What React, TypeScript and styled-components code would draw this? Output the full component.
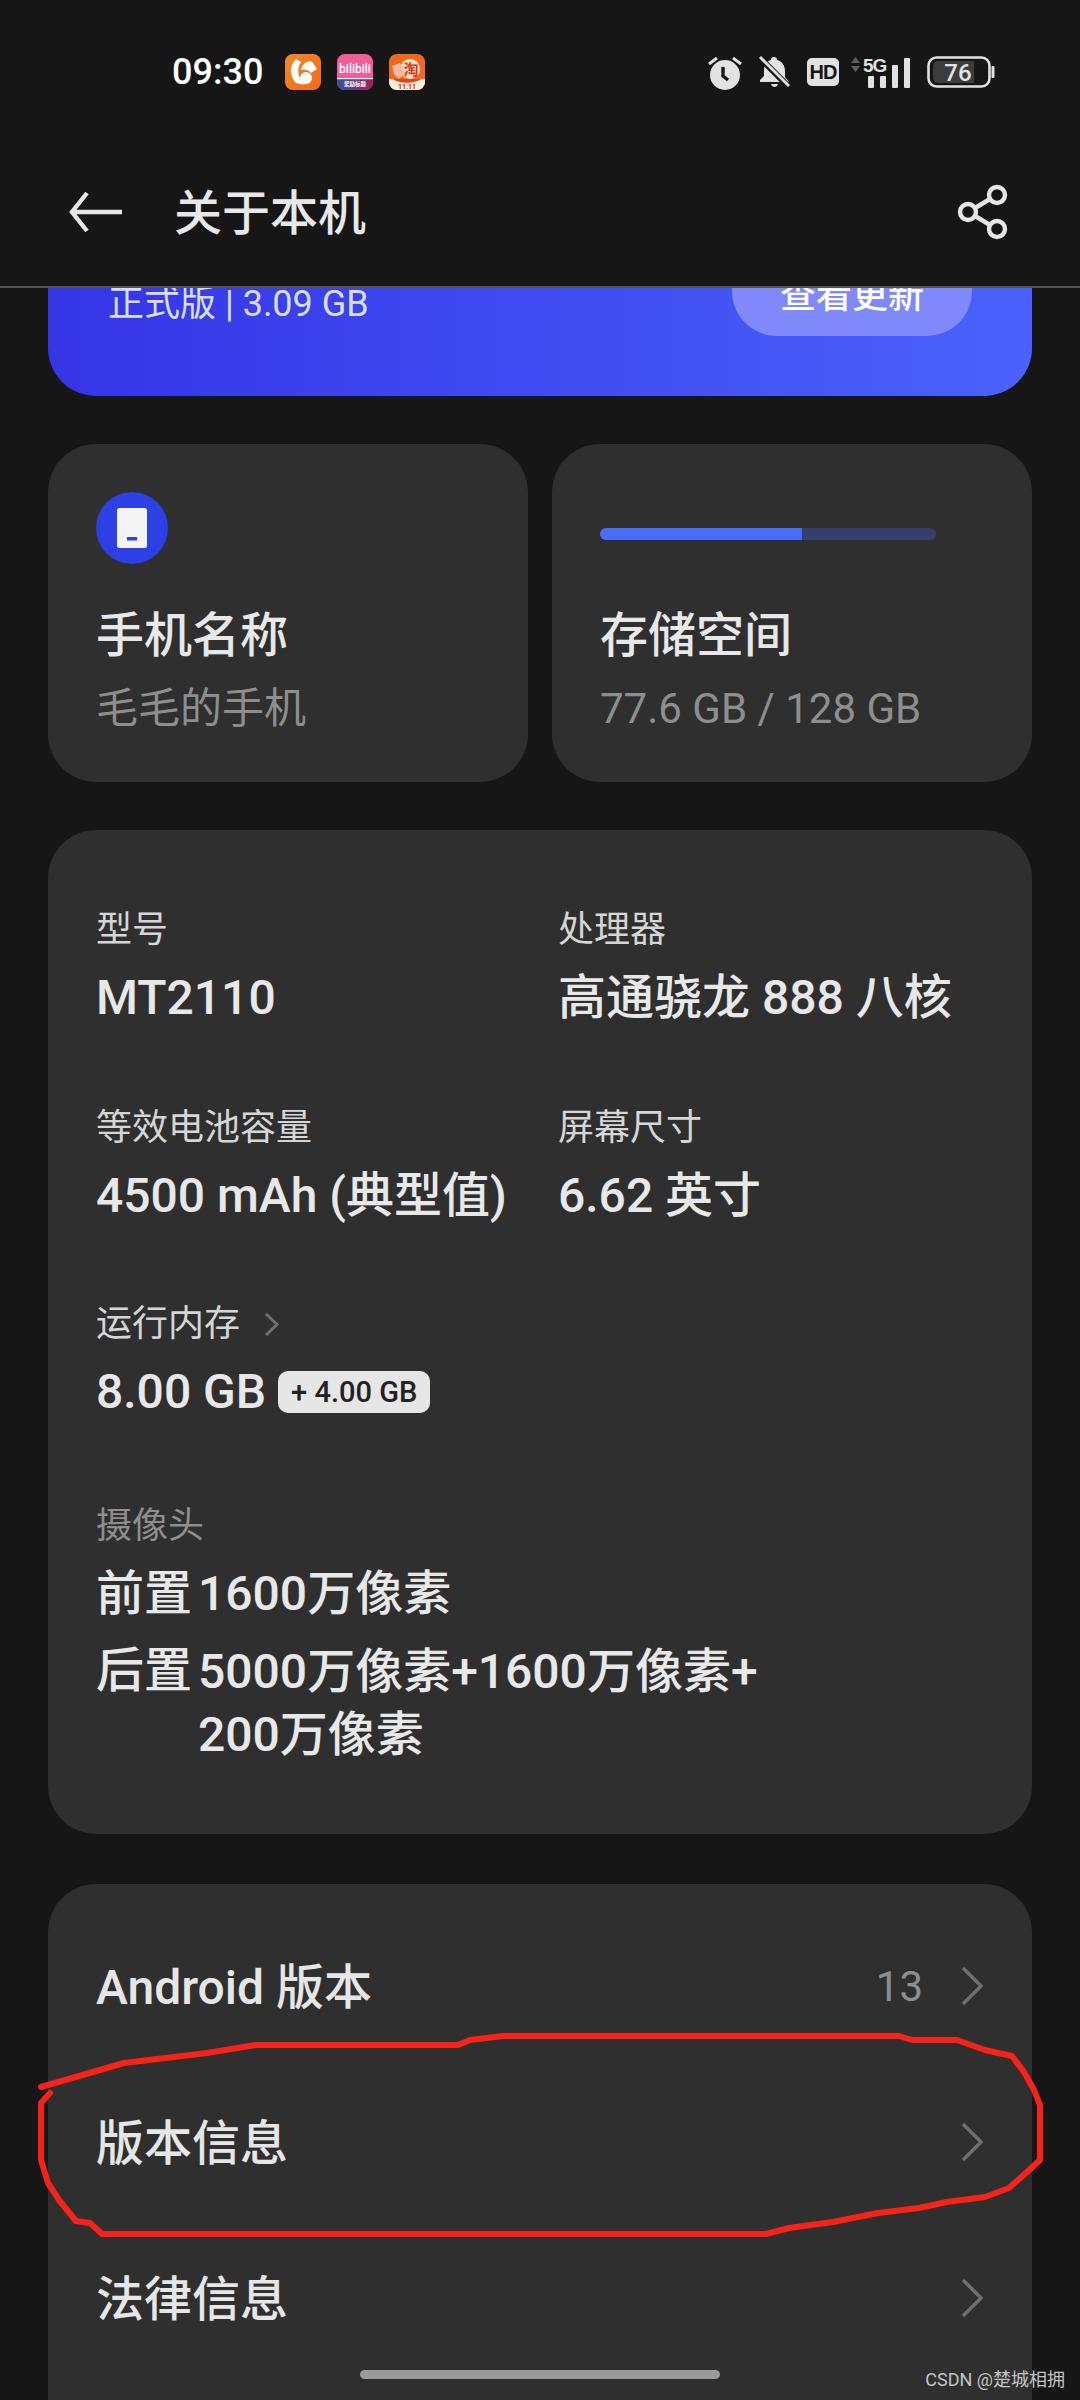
import styled, { createGlobalStyle } from 'styled-components';

const GlobalStyle = createGlobalStyle`
  html, body {
    margin: 0;
    padding: 0;
    background: #161616;
  }
  * {
    box-sizing: border-box;
  }
`;

const Page = styled.div`
  position: relative;
  width: 1080px;
  height: 2400px;
  overflow: hidden;
  display: flex;
  flex-direction: column;
  background: #161616;
  color: #e6e6e6;
  font-family: Roboto, 'Noto Sans CJK SC', sans-serif;
`;

const StatusBar = styled.div`
  height: 144px;
  flex: none;
  display: flex;
  align-items: center;
  padding: 0 85px 0 172px;
`;

const Time = styled.span`
  font-size: 36px;
  font-weight: 500;
  color: #fff;
  width: 113px;
`;

const AppIcons = styled.div`
  display: flex;
  gap: 16px;
`;

const StatusIcons = styled.div`
  margin-left: auto;
  display: flex;
  align-items: center;
  gap: 17px;
`;

const Header = styled.header`
  height: 144px;
  flex: none;
  display: flex;
  align-items: center;
  padding: 0 68px 6px;
  border-bottom: 2px solid #565656;
`;

const Title = styled.h1`
  margin: 0 0 6px 50px;
  font-size: 48px;
  font-weight: 500;
  color: #e8e8e8;
`;

const ShareButton = styled.div`
  margin-left: auto;
  display: flex;
`;

const Scroll = styled.div`
  flex: 1;
  min-height: 0;
  overflow: hidden;
  padding: 0 48px;
  display: flex;
  flex-direction: column;
`;

const Banner = styled.div`
  flex: none;
  height: 108px;
  border-radius: 0 0 48px 48px;
  background: linear-gradient(90deg, #3535e6 0%, #4a62fb 100%);
  display: flex;
  padding: 0 60px;
  margin-bottom: 48px;
`;

const BannerText = styled.span`
  margin-top: -2px;
  font-size: 36px;
  line-height: 36px;
  height: 36px;
  color: #d9defc;
`;

const UpdateButton = styled.div`
  margin-left: auto;
  margin-top: -42px;
  width: 240px;
  height: 90px;
  padding-top: 2px;
  border-radius: 45px;
  background: #8089f9;
  color: #fff;
  font-size: 36px;
  font-weight: 500;
  display: flex;
  align-items: center;
  justify-content: center;
`;

const MiniCards = styled.div`
  flex: none;
  display: grid;
  grid-template-columns: 480px 480px;
  gap: 24px;
  margin-bottom: 48px;
`;

const Card = styled.section`
  background: #2f2f2f;
  border-radius: 48px;
`;

const MiniCard = styled(Card)`
  height: 338px;
  padding: 48px;
`;

const IconSlot = styled.div<{ $bar?: boolean }>`
  height: 72px;
  margin-bottom: 42px;
  padding-top: ${p => (p.$bar ? '36px' : '0')};
`;

const PhoneBadge = styled.div`
  width: 72px;
  height: 72px;
  border-radius: 50%;
  background: #2c40e6;
  display: flex;
  align-items: center;
  justify-content: center;
`;

const Progress = styled.div`
  width: 336px;
  height: 12px;
  border-radius: 6px;
  overflow: hidden;
  background: #34406a;
`;

const ProgressFill = styled.div`
  height: 100%;
  background: #4a6cf7;
`;

const MiniTitle = styled.div`
  font-size: 48px;
  font-weight: 500;
  line-height: 60px;
  color: #e8e8e8;
`;

const MiniSub = styled.div`
  margin-top: 15px;
  font-size: 42px;
  line-height: 56px;
  color: #8e8e8e;
`;

const SpecCard = styled(Card)`
  flex: none;
  height: 1004px;
  padding: 76px 48px 0;
  margin-bottom: 50px;
`;

const SpecGrid = styled.div`
  display: grid;
  grid-template-columns: 462px 1fr;
  row-gap: 76px;
`;

const Spec = styled.div<{ $wide?: boolean; $lift?: number }>`
  display: flex;
  flex-direction: column;
  gap: 14px;
  grid-column: ${p => (p.$wide ? '1 / -1' : 'auto')};
  margin-top: ${p => p.$lift ?? 0}px;
`;

const Label = styled.div<{ $muted?: boolean }>`
  display: flex;
  align-items: center;
  gap: 24px;
  font-size: 36px;
  line-height: 48px;
  color: ${p => (p.$muted ? '#8e8e8e' : '#d6d6d6')};
`;

const Value = styled.div`
  display: flex;
  align-items: center;
  gap: 12px;
  font-size: 48px;
  font-weight: 500;
  line-height: 60px;
  color: #e8e8e8;
  white-space: nowrap;
`;

const Extra = styled.span`
  height: 42px;
  padding: 0 13px;
  border-radius: 10px;
  background: #e6e6e6;
  color: #222;
  font-size: 29px;
  font-weight: 500;
  line-height: 42px;
`;

const CameraRows = styled.div`
  display: grid;
  grid-template-columns: 102px 1fr;
  row-gap: 17px;
  font-size: 48px;
  font-weight: 500;
  line-height: 60px;
  color: #e8e8e8;
`;

const CameraLines = styled.div`
  line-height: 63px;
  margin-top: -1px;
`;

const ListCard = styled(Card)`
  flex: none;
  height: 640px;
  padding-top: 24px;
`;

const Row = styled.div`
  height: 156px;
  display: flex;
  align-items: center;
  padding: 0 49px 0 48px;
`;

const RowTitle = styled.span`
  margin-bottom: 6px;
  font-size: 48px;
  font-weight: 500;
  color: #e6e6e6;
`;

const RowValue = styled.span`
  margin-left: auto;
  margin-right: 38px;
  font-size: 42px;
  color: #8e8e8e;
`;

const RowChevron = styled.div<{ $push?: boolean }>`
  display: flex;
  margin-left: ${p => (p.$push ? 'auto' : '0')};
`;

const Annotation = styled.svg`
  position: absolute;
  left: 0;
  top: 0;
  pointer-events: none;
`;

const HomeBar = styled.div`
  position: absolute;
  left: 360px;
  top: 2370px;
  width: 360px;
  height: 9px;
  border-radius: 5px;
  background: #9a9a9a;
`;

const Watermark = styled.div`
  position: absolute;
  right: 15px;
  top: 2367px;
  font-size: 18px;
  line-height: 26px;
  color: #c4c4c4;
`;

const HdBadge = styled.div`
  width: 32px;
  height: 28px;
  margin-right: -6px;
  border-radius: 5px;
  background: #e2e2e2;
  color: #161616;
  font-family: 'Liberation Sans', sans-serif;
  font-size: 20px;
  font-weight: 700;
  letter-spacing: -1px;
  text-align: center;
  line-height: 28px;
`;

const Chevron = ({ w, h, color = '#6f6f6f', sw = 3.5 }: { w: number; h: number; color?: string; sw?: number }) => (
  <svg width={w} height={h} viewBox={`0 0 ${w} ${h}`} fill="none">
    <path d={`M2 2 L${w - 2} ${h / 2} L2 ${h - 2}`} stroke={color} strokeWidth={sw} />
  </svg>
);

const UcIcon = () => (
  <svg width="36" height="36" viewBox="0 0 36 36">
    <defs>
      <linearGradient id="uc" x1="0" y1="0" x2="1" y2="1">
        <stop offset="0" stopColor="#f08a2c" />
        <stop offset="1" stopColor="#f2691a" />
      </linearGradient>
    </defs>
    <rect width="36" height="36" rx="8" fill="url(#uc)" />
    <path d="M11 5 C4 12 5 23 11 29 L20 31 C13 25 11 15 16 8 Z" fill="#fff" />
    <circle cx="21" cy="24" r="6" fill="#fff" />
    <path d="M16 16 C18 8 25 5 28 9 L32 15 L26 19 C24 16 21 15 16 16 Z" fill="#fff" />
  </svg>
);

const BiliIcon = () => (
  <svg width="36" height="36" viewBox="0 0 36 36">
    <defs>
      <linearGradient id="bili" x1="0" y1="0" x2="1" y2="0">
        <stop offset="0" stopColor="#2a55a8" />
        <stop offset="1" stopColor="#a81c58" />
      </linearGradient>
    </defs>
    <rect width="36" height="36" rx="8" fill="#ee5f98" />
    <path d="M0 25 H36 V28 A8 8 0 0 1 28 36 H8 A8 8 0 0 1 0 28 Z" fill="url(#bili)" />
    <rect y="24" width="36" height="1.2" fill="#fff" />
    <text x="18" y="19" textAnchor="middle" fontSize="12" fontWeight="500" fill="#fff" fontFamily="Roboto, sans-serif">
      bilibili
    </text>
    <text x="18" y="32" textAnchor="middle" fontSize="5.5" fontWeight="700" fill="#fff" fontFamily="'Noto Sans CJK SC', sans-serif">
      奖励标题
    </text>
  </svg>
);

const TaobaoIcon = () => (
  <svg width="36" height="36" viewBox="0 0 36 36">
    <defs>
      <clipPath id="tb">
        <rect width="36" height="36" rx="8" />
      </clipPath>
    </defs>
    <g clipPath="url(#tb)">
      <rect width="36" height="36" fill="#ee6a1e" />
      <rect y="25" width="36" height="11" fill="#fdeedd" />
      <path d="M4 25 C10 30 26 30 32 25 Z" fill="#e8401e" />
      <circle cx="21" cy="15" r="10" fill="#fbe3c8" />
      <path d="M3 12 L11 9 L16 19 L10 25 L5 20 Z" fill="#f9b7a0" />
      <text x="22" y="21" textAnchor="middle" fontSize="15" fontWeight="700" fill="#d8341a" fontFamily="'Noto Sans CJK SC', sans-serif">
        淘
      </text>
      <text x="18" y="34.5" textAnchor="middle" fontSize="7" fontWeight="700" fill="#c62a1c" fontFamily="Roboto, sans-serif">
        11.11
      </text>
    </g>
  </svg>
);

const AlarmIcon = () => (
  <svg width="34" height="35" viewBox="0 0 34 35">
    <circle cx="17" cy="20" r="15" fill="#e2e2e2" />
    <path d="M1 9 L9 3 M33 9 L25 3" stroke="#e2e2e2" strokeWidth="3" />
    <path d="M15 12 V21 L20 25" stroke="#161616" strokeWidth="3.4" fill="none" />
  </svg>
);

const MuteBellIcon = () => (
  <svg width="31" height="34" viewBox="0 0 31 34">
    <path d="M15 2 C17 2 18 3 18 5 C23 6 26 11 26 16 V22 L30 27 H1 V25 L5 21 V15 C5 10 8 6 12 5 C12 3 13 2 15 2 Z" fill="#e2e2e2" />
    <path d="M12 29 H19 C18 33 13 33 12 29 Z" fill="#e2e2e2" />
    <path d="M0 2 L30 32" stroke="#161616" strokeWidth="6" />
    <path d="M1 2 L30 31" stroke="#e2e2e2" strokeWidth="3" />
  </svg>
);

const SignalIcon = () => (
  <svg width="60" height="34" viewBox="0 0 60 34">
    <path d="M1 8 L5.5 2 L10 8 Z M1 11 L5.5 17 L10 11 Z" fill="#5e5e5e" />
    <text x="13" y="17" fontSize="19" fontWeight="700" fill="#e2e2e2" fontFamily="'Liberation Sans', sans-serif" letterSpacing="-1">
      5G
    </text>
    <rect x="18" y="21" width="6" height="12" rx="1" fill="#e2e2e2" />
    <rect x="30" y="21" width="6" height="12" rx="1" fill="#e2e2e2" />
    <rect x="42" y="10" width="6" height="23" rx="1" fill="#e2e2e2" />
    <rect x="54" y="3" width="6" height="30" rx="1" fill="#e2e2e2" />
  </svg>
);

const BatteryIcon = () => (
  <svg width="68" height="32" viewBox="0 0 68 32">
    <rect x="1.5" y="1.5" width="61" height="29" rx="8" fill="none" stroke="#e2e2e2" strokeWidth="2.6" />
    <path d="M11 5 H47 V27 H11 A5 5 0 0 1 6 22 V10 A5 5 0 0 1 11 5 Z" fill="#3c3c3c" />
    <rect x="64.5" y="10" width="3" height="12" rx="1" fill="#e2e2e2" />
    <text x="31" y="25" textAnchor="middle" fontSize="24" fontWeight="500" fill="#e2e2e2" fontFamily="Roboto, sans-serif">
      76
    </text>
  </svg>
);

const BackArrow = () => (
  <svg width="56" height="44" viewBox="0 0 56 44" fill="none">
    <path d="M54 22 H6 M19 3 L4 22 L19 41" stroke="#e6e6e6" strokeWidth="4.4" />
  </svg>
);

const ShareIcon = () => (
  <svg width="56" height="56" viewBox="0 0 56 56" fill="none" stroke="#e6e6e6" strokeWidth="4.4">
    <circle cx="41" cy="11" r="8" />
    <circle cx="12" cy="28" r="8" />
    <circle cx="41" cy="45" r="8" />
    <path d="M19 24 L34 15 M19 32 L34 41" />
  </svg>
);

const PhoneGlyph = () => (
  <svg width="30" height="40" viewBox="0 0 30 40">
    <rect width="30" height="40" rx="2.5" fill="#f4f4f4" />
    <rect x="10" y="29" width="10" height="3.5" fill="#2c40e6" />
  </svg>
);

// hand drawn loop around the "版本信息" row
const loop =
  'M41 2087 L124 2063 L207 2053 L256 2045 L458 2045 L470 2040 L503 2036 L899 2036 L912 2040 L957 2040 ' +
  'L985 2050 L1012 2056 L1024 2072 L1034 2090 L1040 2105 L1040 2160 L1026 2173 L1009 2188 L985 2197 ' +
  'L947 2202 L919 2208 L878 2213 L833 2222 L789 2228 L766 2234 L102 2234 L90 2223 L76 2221 L59 2200 ' +
  'L48 2183 L41 2160 L41 2103 L50 2093';

export default function App() {
  return (
    <Page>
      <GlobalStyle />
      <StatusBar>
        <Time>09:30</Time>
        <AppIcons>
          <UcIcon />
          <BiliIcon />
          <TaobaoIcon />
        </AppIcons>
        <StatusIcons>
          <AlarmIcon />
          <MuteBellIcon />
          <HdBadge>HD</HdBadge>
          <SignalIcon />
          <BatteryIcon />
        </StatusIcons>
      </StatusBar>

      <Header>
        <BackArrow />
        <Title>关于本机</Title>
        <ShareButton>
          <ShareIcon />
        </ShareButton>
      </Header>

      <Scroll>
        <Banner>
          <BannerText>正式版 | 3.09 GB</BannerText>
          <UpdateButton>查看更新</UpdateButton>
        </Banner>

        <MiniCards>
          <MiniCard>
            <IconSlot>
              <PhoneBadge>
                <PhoneGlyph />
              </PhoneBadge>
            </IconSlot>
            <MiniTitle>手机名称</MiniTitle>
            <MiniSub>毛毛的手机</MiniSub>
          </MiniCard>
          <MiniCard>
            <IconSlot $bar>
              <Progress>
                <ProgressFill style={{ width: '60%' }} />
              </Progress>
            </IconSlot>
            <MiniTitle>存储空间</MiniTitle>
            <MiniSub>77.6 GB / 128 GB</MiniSub>
          </MiniCard>
        </MiniCards>

        <SpecCard>
          <SpecGrid>
            <Spec>
              <Label>型号</Label>
              <Value>MT2110</Value>
            </Spec>
            <Spec>
              <Label>处理器</Label>
              <Value>高通骁龙 888 八核</Value>
            </Spec>
            <Spec>
              <Label>等效电池容量</Label>
              <Value>4500 mAh (典型值)</Value>
            </Spec>
            <Spec>
              <Label>屏幕尺寸</Label>
              <Value>6.62 英寸</Value>
            </Spec>
            <Spec $wide $lift={-2}>
              <Label>
                运行内存
                <Chevron w={15} h={25} sw={3} />
              </Label>
              <Value>
                8.00 GB
                <Extra>+ 4.00 GB</Extra>
              </Value>
            </Spec>
            <Spec $wide $lift={4}>
              <Label $muted>摄像头</Label>
              <CameraRows>
                <span>前置</span>
                <span>1600万像素</span>
                <span>后置</span>
                <CameraLines>
                  5000万像素+1600万像素+
                  <br />
                  200万像素
                </CameraLines>
              </CameraRows>
            </Spec>
          </SpecGrid>
        </SpecCard>

        <ListCard>
          <Row>
            <RowTitle>Android 版本</RowTitle>
            <RowValue>13</RowValue>
            <RowChevron>
              <Chevron w={22} h={40} />
            </RowChevron>
          </Row>
          <Row>
            <RowTitle>版本信息</RowTitle>
            <RowChevron $push>
              <Chevron w={22} h={40} />
            </RowChevron>
          </Row>
          <Row>
            <RowTitle>法律信息</RowTitle>
            <RowChevron $push>
              <Chevron w={22} h={40} />
            </RowChevron>
          </Row>
        </ListCard>
      </Scroll>

      <Annotation width="1080" height="2400" viewBox="0 0 1080 2400" fill="none">
        <path d={loop} stroke="#f5231a" strokeWidth="6" strokeLinejoin="round" strokeLinecap="round" />
      </Annotation>
      <HomeBar />
      <Watermark>CSDN @楚城相拥</Watermark>
    </Page>
  );
}
